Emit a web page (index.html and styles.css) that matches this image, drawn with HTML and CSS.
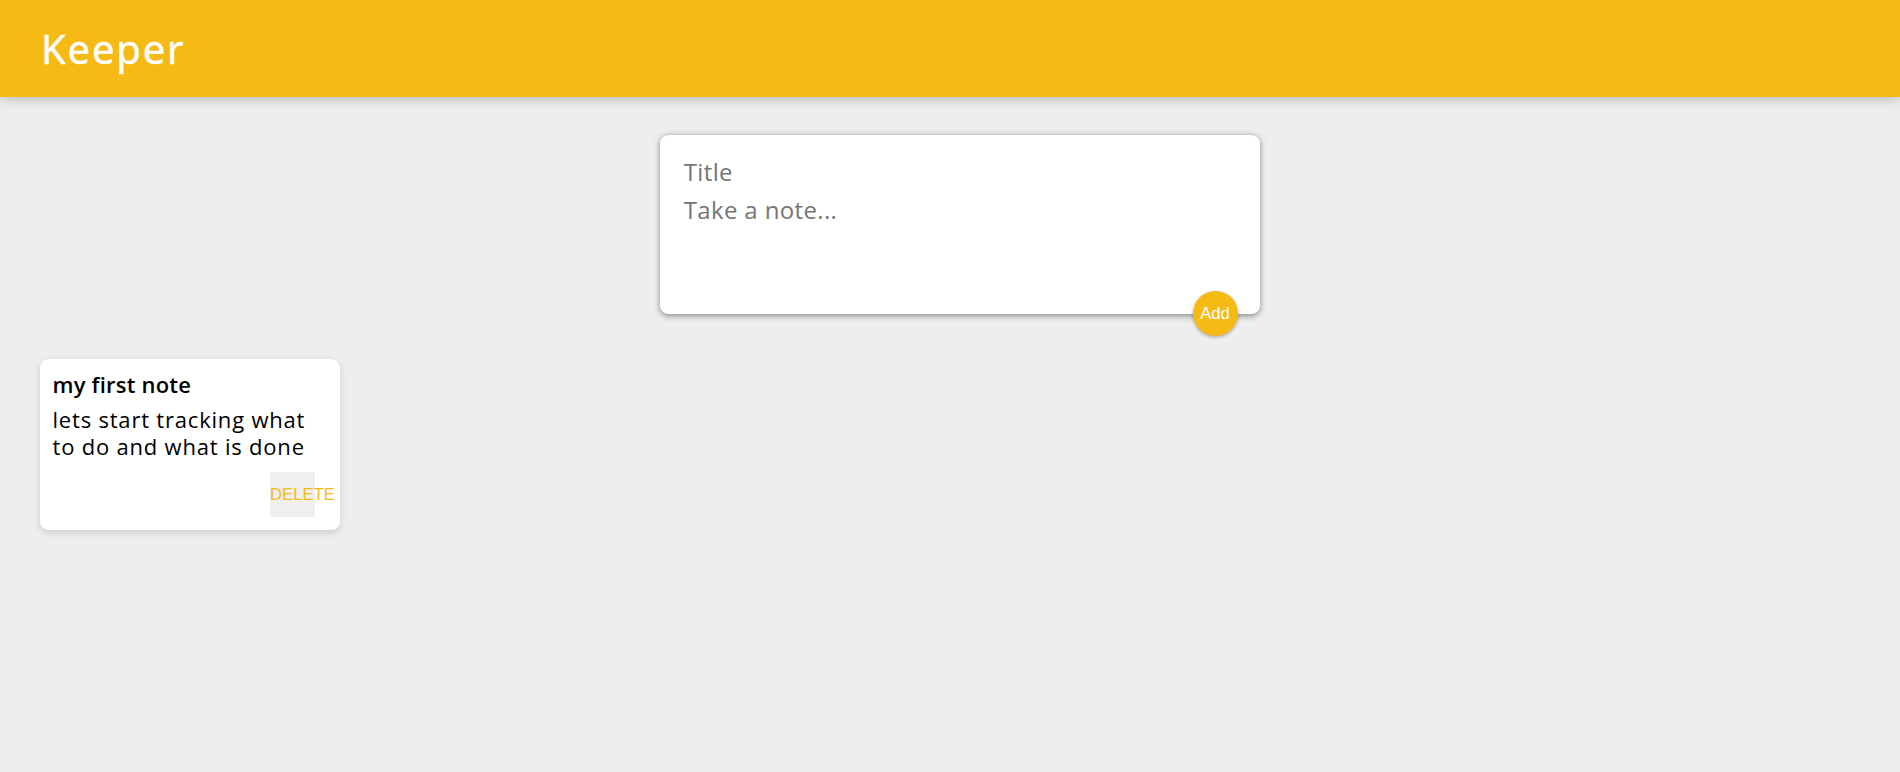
FILE: index.html
```html
<!DOCTYPE html>
<html lang="en">
<head>
<meta charset="utf-8">
<title>Keeper</title>
<link rel="stylesheet" href="styles.css">
</head>
<body>
<header class="app-header">
  <h1 class="logo">Keeper</h1>
</header>
<div class="composer">
  <form class="create-note">
    <input class="field field-title" name="title" placeholder="Title">
    <textarea class="field field-content" name="content" placeholder="Take a note..." rows="3"></textarea>
    <button type="button" class="add-btn">Add</button>
  </form>
</div>
<div class="notes">
  <div class="note">
    <h1 class="note-title">my first note</h1>
    <p class="note-content">lets start tracking what to do and what is done</p>
    <div class="note-actions">
      <button type="button" class="delete-btn">DELETE</button>
    </div>
  </div>
</div>
</body>
</html>
```

FILE: styles.css
```css
* {
  margin: 0;
  padding: 0;
  box-sizing: border-box;
}

html {
  font-family: "Open Sans", "Liberation Sans", sans-serif;
}

body {
  background: #eeeeee;
  padding: 0 20px;
  min-height: 772px;
}

.app-header {
  background-color: #f5ba13;
  margin: 0 -20px;
  padding: 20px 41px;
  height: 97px;
  box-shadow: 0 0 12.5px 0 rgba(0, 0, 0, 0.3);
}

.logo {
  color: #ffffff;
  font-family: "Noto Sans", sans-serif;
  font-weight: 400;
  font-size: 40px;
  line-height: 57px;
  letter-spacing: 1.8px;
  -webkit-text-stroke: 0.4px #ffffff;
}

.composer {
  padding-left: 20px;
}

.create-note {
  position: relative;
  width: 600px;
  margin: 37.5px auto 25px auto;
  background: #ffffff;
  padding: 18.75px;
  border-radius: 8.75px;
  box-shadow: 0 1.25px 6.25px rgb(138, 137, 137);
  display: flex;
  flex-direction: column;
}

.field {
  width: 100%;
  border: none;
  padding: 4px 5px 5px 5px;
  outline: none;
  font-size: 24px;
  font-family: inherit;
  line-height: 29px;
  letter-spacing: 0.35px;
  resize: none;
  color: #222;
  background: transparent;
}

.field::placeholder {
  color: #757575;
}

.field-content {
  height: 103.5px;
}

.add-btn {
  position: absolute;
  right: 22.5px;
  bottom: -22.5px;
  background: #f5ba13;
  color: #ffffff;
  border: none;
  border-radius: 50%;
  width: 45px;
  height: 45px;
  box-shadow: 0 1.25px 3.75px rgba(0, 0, 0, 0.3);
  font-family: "Liberation Sans", Arial, sans-serif;
  font-size: 16.67px;
}

.notes {
  display: flex;
  flex-wrap: wrap;
}

.note {
  background: #ffffff;
  border-radius: 8.75px;
  box-shadow: 0 2.5px 6.25px #cccccc;
  padding: 12.5px;
  width: 300px;
  margin: 20px;
}

.note-title {
  font-size: 22px;
  font-weight: 600;
  line-height: 27px;
  letter-spacing: 0.2px;
  margin-bottom: 7.5px;
  color: #000;
}

.note-content {
  font-size: 22px;
  line-height: 27px;
  letter-spacing: 0.8px;
  margin-bottom: 12.5px;
  white-space: pre-wrap;
  word-wrap: break-word;
  color: #000;
}

.note-actions {
  display: flex;
  justify-content: flex-end;
}

.delete-btn {
  margin-right: 12.5px;
  color: #f5ba13;
  background: #efefef;
  border: none;
  width: 45px;
  height: 45px;
  font-family: "Liberation Sans", Arial, sans-serif;
  font-size: 16.67px;
  text-align: left;
  white-space: nowrap;
  overflow: visible;
}
```
